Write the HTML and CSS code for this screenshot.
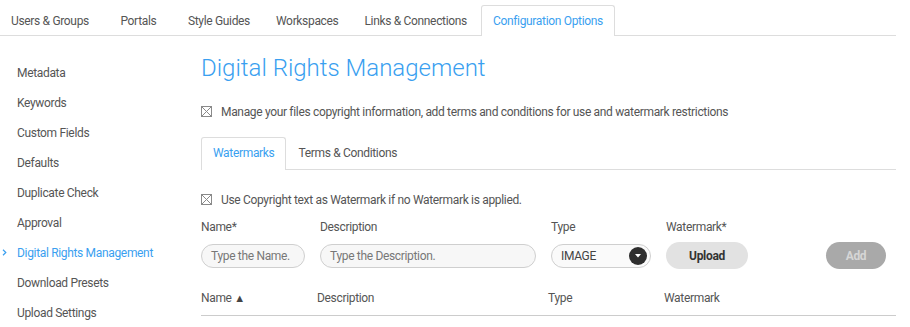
FILE: index.html
```html
<!DOCTYPE html>
<html>
<head>
<meta charset="utf-8">
<link rel="stylesheet" href="styles.css">
</head>
<body>
<header class="topnav">
  <a class="tab">Users &amp; Groups</a>
  <a class="tab">Portals</a>
  <a class="tab">Style Guides</a>
  <a class="tab">Workspaces</a>
  <a class="tab">Links &amp; Connections</a>
  <a class="tab active">Configuration Options</a>
</header>
<div class="layout">
  <aside class="sidebar">
    <a class="side-item">Metadata</a>
    <a class="side-item">Keywords</a>
    <a class="side-item">Custom Fields</a>
    <a class="side-item">Defaults</a>
    <a class="side-item">Duplicate Check</a>
    <a class="side-item">Approval</a>
    <a class="side-item active"><svg class="chev" width="5" height="7" viewBox="0 0 5 7"><path d="M1 0.8 L3.8 3.5 L1 6.2" fill="none" stroke="#3a9ff0" stroke-width="1.2"/></svg>Digital Rights Management</a>
    <a class="side-item">Download Presets</a>
    <a class="side-item">Upload Settings</a>
  </aside>
  <main class="content">
    <h1 class="title">Digital Rights Management</h1>
    <div class="check-row first">
      <svg class="cb" width="11" height="11" viewBox="0 0 11 11"><rect x="0.5" y="0.5" width="10" height="10" fill="none" stroke="#8a8a8a"/><path d="M1 1 L10 10 M10 1 L1 10" stroke="#8a8a8a" stroke-width="1"/></svg>
      <span>Manage your files copyright information, add terms and conditions for use and watermark restrictions</span>
    </div>
    <div class="subtabs">
      <a class="subtab active">Watermarks</a>
      <a class="subtab">Terms &amp; Conditions</a>
    </div>
    <div class="check-row second">
      <svg class="cb" width="11" height="11" viewBox="0 0 11 11"><rect x="0.5" y="0.5" width="10" height="10" fill="none" stroke="#8a8a8a"/><path d="M1 1 L10 10 M10 1 L1 10" stroke="#8a8a8a" stroke-width="1"/></svg>
      <span>Use Copyright text as Watermark if no Watermark is applied.</span>
    </div>
    <div class="form">
      <label class="lbl">Name*</label>
      <label class="lbl">Description</label>
      <label class="lbl">Type</label>
      <label class="lbl">Watermark*</label>
      <span></span>
      <div class="input">Type the Name.</div>
      <div class="input">Type the Description.</div>
      <div class="select"><span>IMAGE</span><span class="sel-btn"><svg width="6" height="4" viewBox="0 0 6 4"><path d="M0 0 L6 0 L3 3.5 Z" fill="#fff"/></svg></span></div>
      <button class="btn upload">Upload</button>
      <button class="btn add">Add</button>
    </div>
    <div class="thead">
      <span>Name <span class="sort">▲</span></span>
      <span>Description</span>
      <span>Type</span>
      <span>Watermark</span>
    </div>
  </main>
</div>
</body>
</html>
```
FILE: styles.css
```css
* { box-sizing: border-box; }
html, body { margin: 0; padding: 0; background: #fff; }
body {
  font-family: Roboto, "Liberation Sans", sans-serif;
  font-size: 12px;
  letter-spacing: -0.33px;
  color: #555;
  width: 910px;
  height: 327px;
  overflow: hidden;
}
a { text-decoration: none; color: inherit; }

.topnav {
  display: flex;
  align-items: flex-end;
  height: 36px;
  border-bottom: 1px solid #ddd;
  margin-right: 14px;
}
.tab {
  display: block;
  min-width: 71px;
  text-align: center;
  height: 31px;
  line-height: 30px;
  padding: 0 11px;
  margin-right: 2px;
  border: 1px solid transparent;
  border-bottom: none;
  margin-bottom: -1px;
  white-space: nowrap;
}
.tab:first-child { margin-left: -1px; }
.tab.active {
  border-color: #ddd;
  border-radius: 3px 3px 0 0;
  background: #fff;
  color: #3a9ff0;
}

.layout {
  display: grid;
  grid-template-columns: 190px 1fr;
}
.sidebar {
  display: flex;
  flex-direction: column;
  padding-top: 22px;
}
.side-item {
  display: flex;
  align-items: center;
  height: 30px;
  line-height: 30px;
  padding-left: 17px;
  white-space: nowrap;
}
.side-item.active {
  color: #3a9ff0;
  padding-left: 2px;
}
.chev { margin-right: 10px; margin-top: -1px; }

.content {
  padding: 0 14px 0 11px;
}
.title {
  margin: 17px 0 0;
  font-size: 24px;
  font-weight: 300;
  line-height: 30px;
  letter-spacing: 0;
  color: #3a9ff0;
}
.check-row {
  display: flex;
  align-items: flex-start;
  line-height: 16px;
  gap: 9px;
}
.check-row .cb { margin-top: 2px; flex: none; }
.check-row.first { margin-top: 21px; }
.check-row.second { margin-top: 22px; }

.subtabs {
  display: flex;
  margin-top: 17px;
  border-bottom: 1px solid #ddd;
}
.subtab {
  height: 33px;
  line-height: 31px;
  padding: 0 11px;
  margin-bottom: -1px;
  border: 1px solid transparent;
  border-bottom: none;
}
.subtab.active {
  border-color: #ddd;
  border-radius: 3px 3px 0 0;
  background: #fff;
  color: #3a9ff0;
}

.form {
  display: grid;
  grid-template-columns: 104px 216px 100px 82px 1fr;
  grid-template-rows: 16px 27px;
  column-gap: 15px;
  row-gap: 7px;
  align-items: center;
  margin-top: 11px;
}
.lbl { line-height: 16px; color: #555; }
.input {
  height: 24px;
  border: 1px solid #cfcfcf;
  border-radius: 12px;
  background: #f7f7f7;
  line-height: 22px;
  padding-left: 9px;
  color: #777;
  white-space: nowrap;
  overflow: hidden;
}
.select {
  height: 24px;
  border: 1px solid #cfcfcf;
  border-radius: 12px;
  background: #fafafa;
  display: flex;
  align-items: center;
  justify-content: space-between;
  padding: 0 3px 0 9px;
  color: #444;
}
.sel-btn {
  width: 18px;
  height: 18px;
  border-radius: 50%;
  background: #2e2e2e;
  display: flex;
  align-items: center;
  justify-content: center;
}
.btn {
  height: 27px;
  border: none;
  border-radius: 14px;
  font-family: Roboto, "Liberation Sans", sans-serif;
  font-size: 12px;
  letter-spacing: -0.33px;
  font-weight: 700;
  padding: 0;
}
.upload {
  width: 82px;
  background: #e2e2e2;
  color: #333;
}
.add {
  width: 60px;
  justify-self: end;
  margin-right: 10px;
  background: #a9a9a9;
  color: #d6d6d6;
}

.thead {
  display: grid;
  grid-template-columns: 116px 231px 116px 1fr;
  margin-top: 21px;
  line-height: 16px;
  padding-bottom: 8px;
  border-bottom: 1px solid #ccc;
  color: #555;
}
.sort { font-size: 11px; color: #444; letter-spacing: 0; }
```
